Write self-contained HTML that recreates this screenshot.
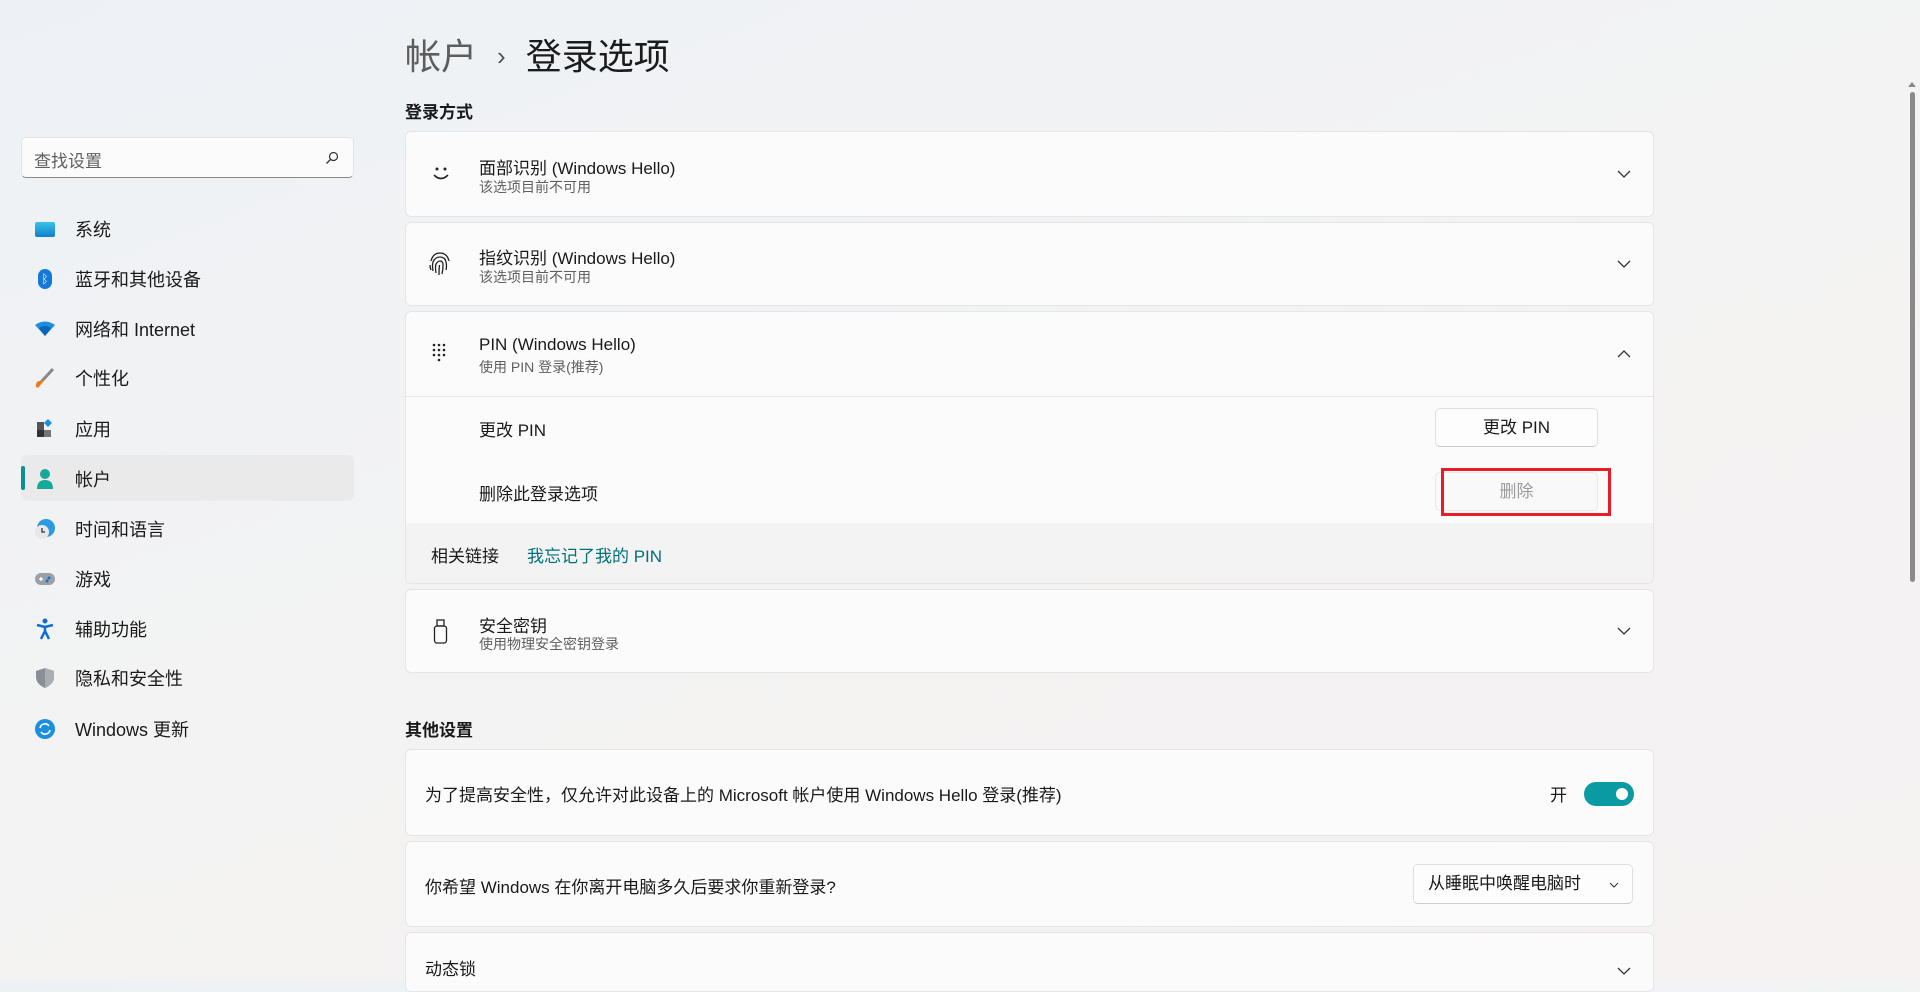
<!DOCTYPE html>
<html><head><meta charset="utf-8"><style>
*{box-sizing:border-box;margin:0;padding:0}
body{width:1920px;height:980px;overflow:hidden;font-family:"Liberation Sans","Noto Sans CJK SC",sans-serif;color:#1a1a1a;background:linear-gradient(160deg,#edf1f6 0%,#f3f3f3 45%,#f5f2f1 100%);position:relative}
.abs{position:absolute}
.title{left:405px;top:28px;font-size:36px;color:#1b1b1b;white-space:nowrap}
.title .g{color:#5d5d5d}
.title .sep{font-size:26px;color:#555;margin:0 20px;position:relative;top:-4px}
.h2{font-size:17px;font-weight:600;left:405px}
.search{left:21px;top:137px;width:333px;height:41px;background:#fbfbfb;border:1px solid #e3e3e3;border-bottom:1px solid #8a8a8a;border-radius:5px;font-size:17px;color:#5f5f5f;padding:9px 12px}
.nav{left:34px;font-size:18px;display:flex;align-items:center;height:30px}
.nav .ic{width:22px;height:22px;margin-right:19px;display:flex;align-items:center;justify-content:center}
.sel{left:21px;top:455px;width:333px;height:46px;background:#eaeaea;border-radius:6px}
.bar{left:21px;top:466px;width:4px;height:24px;background:#0a8f95;border-radius:2px}
.card{left:405px;width:1249px;background:#fbfbfb;border:1px solid #e5e5e5;border-radius:6px}
.ct{left:479px;font-size:17px;white-space:nowrap}
.cs{left:479px;font-size:14px;color:#5f5f5f;white-space:nowrap}
.chev{left:1615px;width:18px;height:18px}
.btn{background:#fdfdfd;border:1px solid #e0e0e0;border-bottom-color:#ccc;border-radius:5px;font-size:17px;text-align:center}
</style></head><body>
<div class="abs title"><span class="g">帐户</span><span class="sep">›</span>登录选项</div>
<div class="abs h2" style="top:98px">登录方式</div>

<div class="abs search">查找设置<svg class="abs" style="right:14px;top:13px" width="14" height="14" viewBox="0 0 14 14"><circle cx="8.5" cy="5.5" r="4" fill="none" stroke="#333" stroke-width="1.2"/><path d="M5.5 8.5L1.5 12.5" stroke="#333" stroke-width="1.3"/></svg></div>

<div class="abs sel"></div><div class="abs bar"></div>
<div class="abs nav" style="top:214px"><div class="ic"><div style="width:20px;height:15px;background:linear-gradient(#3bc3e8,#0f7fcf);border-radius:2px"></div></div>系统</div>
<div class="abs nav" style="top:264px"><div class="ic"><div style="width:14px;height:20px;background:#1479d8;border-radius:7px;color:#fff;font-size:12px;text-align:center;line-height:20px">ᛒ</div></div>蓝牙和其他设备</div>
<div class="abs nav" style="top:314px"><div class="ic"><svg width="22" height="16" viewBox="0 0 22 16"><path d="M1 4Q11-3 21 4L11 15Z" fill="#1a8fe0"/><path d="M5 7Q11 3 17 7L11 15Z" fill="#0c63b8"/></svg></div>网络和 Internet</div>
<div class="abs nav" style="top:363px"><div class="ic"><svg width="22" height="22"><path d="M19 2L7 15" stroke="#888" stroke-width="3"/><path d="M7 15L3 20L4 16Z" fill="#e87b20" stroke="#e87b20" stroke-width="3"/></svg></div>个性化</div>
<div class="abs nav" style="top:414px"><div class="ic"><svg width="22" height="22"><rect x="3" y="4" width="7" height="8" fill="#555"/><rect x="3" y="12" width="7" height="7" fill="#333"/><rect x="10" y="12" width="7" height="7" fill="#777"/><path d="M14 1L18 5L14 9L10 5Z" fill="#1a8fe0"/></svg></div>应用</div>
<div class="abs nav" style="top:464px"><div class="ic"><svg width="22" height="22"><circle cx="11" cy="6" r="5" fill="#16a99b"/><path d="M3 21Q3 12 11 12Q19 12 19 21Z" fill="#16a99b"/></svg></div>帐户</div>
<div class="abs nav" style="top:514px"><div class="ic"><svg width="22" height="22"><circle cx="12" cy="10" r="9" fill="#2b9ae0"/><circle cx="8" cy="14" r="7" fill="#e8e8e8"/><path d="M8 10V14H11" stroke="#333" fill="none" stroke-width="1.3"/></svg></div>时间和语言</div>
<div class="abs nav" style="top:564px"><div class="ic"><svg width="22" height="16"><rect x="1" y="2" width="20" height="12" rx="6" fill="#9aa0a6"/><circle cx="15" cy="7" r="1.5" fill="#1a6fd0"/><circle cx="13" cy="10" r="1.5" fill="#1a6fd0"/><path d="M5 8H9M7 6V10" stroke="#fff" stroke-width="1.3"/></svg></div>游戏</div>
<div class="abs nav" style="top:614px"><div class="ic"><svg width="22" height="22"><circle cx="11" cy="3" r="2.5" fill="#0c6fd0"/><path d="M3 7L11 9L19 7M11 9V13L7 21M11 13L15 21" stroke="#0c6fd0" stroke-width="2.5" fill="none"/></svg></div>辅助功能</div>
<div class="abs nav" style="top:663px"><div class="ic"><svg width="20" height="22"><path d="M10 1L19 4V10Q19 17 10 21Q1 17 1 10V4Z" fill="#8a8f96"/><path d="M10 1L19 4V10Q19 17 10 21Z" fill="#a9aeb4"/></svg></div>隐私和安全性</div>
<div class="abs nav" style="top:714px"><div class="ic"><svg width="22" height="22"><circle cx="11" cy="11" r="10" fill="#1a8fe0"/><path d="M6 10A5 5 0 0 1 15 8M16 12A5 5 0 0 1 7 14" stroke="#fff" stroke-width="1.6" fill="none"/></svg></div>Windows 更新</div>

<div class="abs card" style="top:131px;height:86px"></div>
<svg class="abs" style="left:431px;top:164px" width="20" height="20"><circle cx="6" cy="5" r="1.5" fill="#222"/><circle cx="14" cy="5" r="1.5" fill="#222"/><path d="M3 11Q10 18 17 11" stroke="#222" stroke-width="1.6" fill="none"/></svg>
<div class="abs ct" style="top:154px">面部识别 (Windows Hello)</div>
<div class="abs cs" style="top:177px">该选项目前不可用</div>
<svg class="abs chev" style="top:165px"><path d="M3 6L9 12L15 6" stroke="#333" fill="none" stroke-width="1.3"/></svg>

<div class="abs card" style="top:222px;height:84px"></div>
<svg class="abs" style="left:428px;top:251px" width="24" height="26" viewBox="0 0 24 26" fill="none" stroke="#222" stroke-width="1.3"><path d="M3 10Q5 2 12 2Q19 2 21 10"/><path d="M5 20Q4 15 5 11Q7 6 12 6Q17 6 18 11Q19 15 18 19"/><path d="M8 22Q7 16 8 13Q10 10 12 10Q15 10 15 14Q15 19 14 23"/><path d="M11 24Q11 18 11.5 14"/><path d="M2 14Q2 17 3 19"/></svg>
<div class="abs ct" style="top:244px">指纹识别 (Windows Hello)</div>
<div class="abs cs" style="top:267px">该选项目前不可用</div>
<svg class="abs chev" style="top:255px"><path d="M3 6L9 12L15 6" stroke="#333" fill="none" stroke-width="1.3"/></svg>

<div class="abs card" style="top:311px;height:273px"></div>
<div class="abs" style="left:406px;top:396px;width:1247px;height:1px;background:#e5e5e5"></div>
<div class="abs" style="left:406px;top:523px;width:1247px;height:60px;background:#f3f3f3;border-radius:0 0 6px 6px"></div>
<svg class="abs" style="left:432px;top:343px" width="14" height="24"><g fill="#222"><circle cx="2" cy="2" r="1.3"/><circle cx="7" cy="2" r="1.3"/><circle cx="12" cy="2" r="1.3"/><circle cx="2" cy="7" r="1.3"/><circle cx="7" cy="7" r="1.3"/><circle cx="12" cy="7" r="1.3"/><circle cx="2" cy="12" r="1.3"/><circle cx="7" cy="12" r="1.3"/><circle cx="12" cy="12" r="1.3"/><circle cx="7" cy="17" r="1.3"/></g></svg>
<div class="abs ct" style="top:335px">PIN (Windows Hello)</div>
<div class="abs cs" style="top:357px">使用 PIN 登录(推荐)</div>
<svg class="abs chev" style="top:345px"><path d="M3 12L9 6L15 12" stroke="#333" fill="none" stroke-width="1.3"/></svg>
<div class="abs ct" style="top:416px">更改 PIN</div>
<div class="abs btn" style="left:1435px;top:408px;width:163px;height:39px;line-height:37px">更改 PIN</div>
<div class="abs ct" style="top:480px">删除此登录选项</div>
<div class="abs btn" style="left:1435px;top:472px;width:163px;height:39px;line-height:37px;color:#9b9b9b;background:#f9f9f9;border-color:#e8e8e8">删除</div>
<div class="abs" style="left:1441px;top:468px;width:170px;height:48px;border:3px solid #e81c27"></div>
<div class="abs" style="left:431px;top:542px;font-size:17px">相关链接</div>
<div class="abs" style="left:527px;top:542px;font-size:17px;color:#00707a">我忘记了我的 PIN</div>

<div class="abs card" style="top:589px;height:84px"></div>
<svg class="abs" style="left:433px;top:619px" width="16" height="26"><rect x="4" y="1" width="7" height="6" fill="none" stroke="#222" stroke-width="1.3"/><rect x="1.5" y="7" width="12" height="17" rx="2.5" fill="none" stroke="#222" stroke-width="1.3"/></svg>
<div class="abs ct" style="top:612px">安全密钥</div>
<div class="abs cs" style="top:634px">使用物理安全密钥登录</div>
<svg class="abs chev" style="top:622px"><path d="M3 6L9 12L15 6" stroke="#333" fill="none" stroke-width="1.3"/></svg>

<div class="abs h2" style="top:716px">其他设置</div>
<div class="abs card" style="top:749px;height:87px"></div>
<div class="abs" style="left:425px;top:781px;font-size:17px;white-space:nowrap">为了提高安全性，仅允许对此设备上的 Microsoft 帐户使用 Windows Hello 登录(推荐)</div>
<div class="abs" style="left:1550px;top:781px;font-size:17px">开</div>
<div class="abs" style="left:1584px;top:782px;width:50px;height:24px;border-radius:12px;background:#0a9aa2"><div style="position:absolute;right:6px;top:6px;width:12px;height:12px;border-radius:6px;background:#fff"></div></div>

<div class="abs card" style="top:841px;height:86px"></div>
<div class="abs" style="left:425px;top:873px;font-size:17px;white-space:nowrap">你希望 Windows 在你离开电脑多久后要求你重新登录?</div>
<div class="abs btn" style="left:1413px;top:864px;width:220px;height:40px;line-height:38px;text-align:left;padding-left:14px">从睡眠中唤醒电脑时<svg class="abs" style="right:12px;top:15px" width="12" height="10"><path d="M2 3L6 7L10 3" stroke="#333" fill="none"/></svg></div>

<div class="abs card" style="top:932px;height:60px"></div>
<div class="abs" style="left:425px;top:955px;font-size:17px">动态锁</div>
<svg class="abs chev" style="top:962px"><path d="M3 6L9 12L15 6" stroke="#333" fill="none" stroke-width="1.3"/></svg>

<div class="abs" style="left:1910px;top:92px;width:5px;height:490px;background:#8a8a8a;border-radius:3px"></div>
<svg class="abs" style="left:1907px;top:80px" width="10" height="8"><path d="M1 7L5 2L9 7Z" fill="#888"/></svg>
</body></html>
